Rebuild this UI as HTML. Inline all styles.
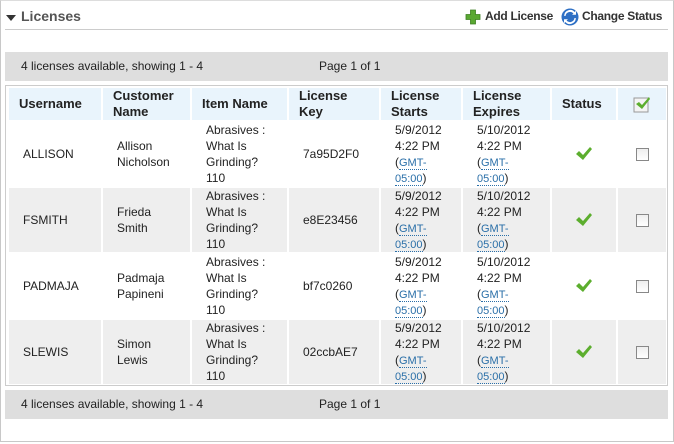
<!DOCTYPE html>
<html><head><style>
body{margin:0;width:674px;height:444px;background:#fff;font-family:"Liberation Sans",Arial,sans-serif;font-size:12px;color:#222;position:relative;overflow:hidden}
.frame{position:absolute;left:0;top:0;width:672px;height:440px;border:1px solid #c8c8c8;border-top-color:#ddd}
.title{position:absolute;left:21px;top:8px;font-size:14px;font-weight:bold;color:#555}
.tri{position:absolute;left:6px;top:15px;width:0;height:0;border-left:5px solid transparent;border-right:5px solid transparent;border-top:6px solid #333}
.hr{position:absolute;left:5px;top:29px;width:663px;height:1px;background:#ccc}
.act{position:absolute;top:9px;font-size:12px;font-weight:bold;color:#333;letter-spacing:-0.3px}
.bar{position:absolute;left:5px;width:663px;height:29px;background:#dedede;line-height:29px}
.bar span{position:absolute}
.box{position:absolute;left:5px;top:85px;width:661px;height:299px;border:1px solid #ccc}
table{position:absolute;left:7px;top:86px;width:661px;border-collapse:separate;border-spacing:2px;table-layout:fixed}
th{background:#e9f4fc;padding:0 0 0 10px;text-align:left;font-size:13px;color:#222}
th>div{height:32px;display:flex;align-items:center;line-height:16px}
td{padding:0 0 0 14px;vertical-align:middle}
td>div{height:64px;display:flex;align-items:center;line-height:16px;overflow:hidden}
td.c{padding:0}
td.c>div,th.c>div{justify-content:center}
th.c{padding:0}
tr.g td{background:#eee}
a{color:#2a6fa8;text-decoration:none;border-bottom:1px dotted #2a6fa8;font-size:11px;line-height:1}
.cb{display:inline-block;width:11px;height:11px;border:1px solid #888;background:linear-gradient(#eee,#fff)}
</style></head><body>
<div class="frame"></div>
<div class="tri"></div>
<div class="title">Licenses</div>
<div class="hr"></div>
<svg style="position:absolute;left:465px;top:9px" width="16" height="16" viewBox="0 0 16 16"><path d="M5.5 1h5v4.5H15v5h-4.5V15h-5v-4.5H1v-5h4.5z" fill="#5aa832" stroke="#3d7f22" stroke-width=".8"/></svg>
<div class="act" style="left:485px">Add License</div>
<svg style="position:absolute;left:561px;top:8px" width="18" height="18" viewBox="0 0 18 18"><circle cx="9" cy="9" r="8.5" fill="#2d6fc4"/><path d="M4.5 8a4.6 4.6 0 0 1 8-2.5l-1.5 1.2h4V2.8l-1.3 1.2A6 6 0 0 0 3.2 8zM13.5 10a4.6 4.6 0 0 1-8 2.5l1.5-1.2H3v3.9l1.3-1.2A6 6 0 0 0 14.8 10z" fill="#fff"/></svg>
<div class="act" style="left:582px">Change Status</div>
<div class="bar" style="top:52px"><span style="left:16px">4 licenses available, showing 1 - 4</span><span style="left:314px">Page 1 of 1</span></div>
<div class="box"></div>
<table>
<colgroup><col style="width:92px"><col style="width:87px"><col style="width:95px"><col style="width:90px"><col style="width:80px"><col style="width:87px"><col style="width:64px"><col style="width:48px"></colgroup>
<tr><th><div>Username</div></th><th><div>Customer<br>Name</div></th><th><div>Item Name</div></th><th><div>License<br>Key</div></th><th><div>License<br>Starts</div></th><th><div>License<br>Expires</div></th><th><div>Status</div></th><th class="c"><div><svg width="18" height="18" viewBox="0 0 18 18"><rect x="1" y="3" width="14" height="14" fill="#f4f4f4" stroke="#999"/><path d="M3 9l3-2 3 3 7-8 1 2-8 10z" fill="#5cae2e"/></svg></div></th></tr>
<tr><td><div>ALLISON</div></td><td><div>Allison<br>Nicholson</div></td><td><div>Abrasives :<br>What Is<br>Grinding?<br>110</div></td><td><div>7a95D2F0</div></td><td><div><span>5/9/2012<br>4:22 PM<br>(<a>GMT-</a><br><a>05:00</a>)</span></div></td><td><div><span>5/10/2012<br>4:22 PM<br>(<a>GMT-</a><br><a>05:00</a>)</span></div></td><td class="c"><div><svg width="18" height="16" viewBox="0 0 18 16"><path d="M1 8l3-3 4 4 7-8 2 2-9 11z" fill="#5cae2e"/></svg></div></td><td class="c"><div><span class="cb"></span></div></td></tr>
<tr class="g"><td><div>FSMITH</div></td><td><div>Frieda<br>Smith</div></td><td><div>Abrasives :<br>What Is<br>Grinding?<br>110</div></td><td><div>e8E23456</div></td><td><div><span>5/9/2012<br>4:22 PM<br>(<a>GMT-</a><br><a>05:00</a>)</span></div></td><td><div><span>5/10/2012<br>4:22 PM<br>(<a>GMT-</a><br><a>05:00</a>)</span></div></td><td class="c"><div><svg width="18" height="16" viewBox="0 0 18 16"><path d="M1 8l3-3 4 4 7-8 2 2-9 11z" fill="#5cae2e"/></svg></div></td><td class="c"><div><span class="cb"></span></div></td></tr>
<tr><td><div>PADMAJA</div></td><td><div>Padmaja<br>Papineni</div></td><td><div>Abrasives :<br>What Is<br>Grinding?<br>110</div></td><td><div>bf7c0260</div></td><td><div><span>5/9/2012<br>4:22 PM<br>(<a>GMT-</a><br><a>05:00</a>)</span></div></td><td><div><span>5/10/2012<br>4:22 PM<br>(<a>GMT-</a><br><a>05:00</a>)</span></div></td><td class="c"><div><svg width="18" height="16" viewBox="0 0 18 16"><path d="M1 8l3-3 4 4 7-8 2 2-9 11z" fill="#5cae2e"/></svg></div></td><td class="c"><div><span class="cb"></span></div></td></tr>
<tr class="g"><td><div>SLEWIS</div></td><td><div>Simon<br>Lewis</div></td><td><div>Abrasives :<br>What Is<br>Grinding?<br>110</div></td><td><div>02ccbAE7</div></td><td><div><span>5/9/2012<br>4:22 PM<br>(<a>GMT-</a><br><a>05:00</a>)</span></div></td><td><div><span>5/10/2012<br>4:22 PM<br>(<a>GMT-</a><br><a>05:00</a>)</span></div></td><td class="c"><div><svg width="18" height="16" viewBox="0 0 18 16"><path d="M1 8l3-3 4 4 7-8 2 2-9 11z" fill="#5cae2e"/></svg></div></td><td class="c"><div><span class="cb"></span></div></td></tr>
</table>
<div class="bar" style="top:390px"><span style="left:16px">4 licenses available, showing 1 - 4</span><span style="left:314px">Page 1 of 1</span></div>
</body></html>
